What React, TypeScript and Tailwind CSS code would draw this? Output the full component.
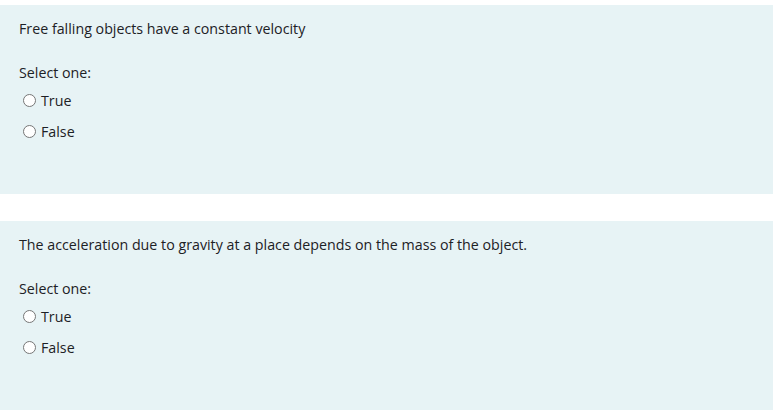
import React from "react";

const questions = [
  "Free falling objects have a constant velocity",
  "The acceleration due to gravity at a place depends on the mass of the object.",
];

function Radio({ label }: { label: string }) {
  return (
    <label className="flex items-center h-[31px] pl-[4px]">
      <span className="w-[13px] h-[13px] rounded-full border border-[#767676] bg-white shrink-0" />
      <span className="ml-[5px]">{label}</span>
    </label>
  );
}

export default function App() {
  return (
    <div
      className="w-[777px] h-[413px] bg-white pt-[5px] text-[14.25px] text-[#1d2125]"
      style={{ fontFamily: '"Segoe UI", "Open Sans", sans-serif' }}
    >
      <div className="flex flex-col gap-[27px] w-[773px]">
        {questions.map((q) => (
          <div key={q} className="h-[189px] bg-[#e7f3f5] px-[19px] pt-[14px]">
            <p className="leading-[20px]">{q}</p>
            <p className="leading-[20px] mt-[24px]">Select one:</p>
            <div className="flex flex-col mt-[2px]">
              <Radio label="True" />
              <Radio label="False" />
            </div>
          </div>
        ))}
      </div>
    </div>
  );
}
